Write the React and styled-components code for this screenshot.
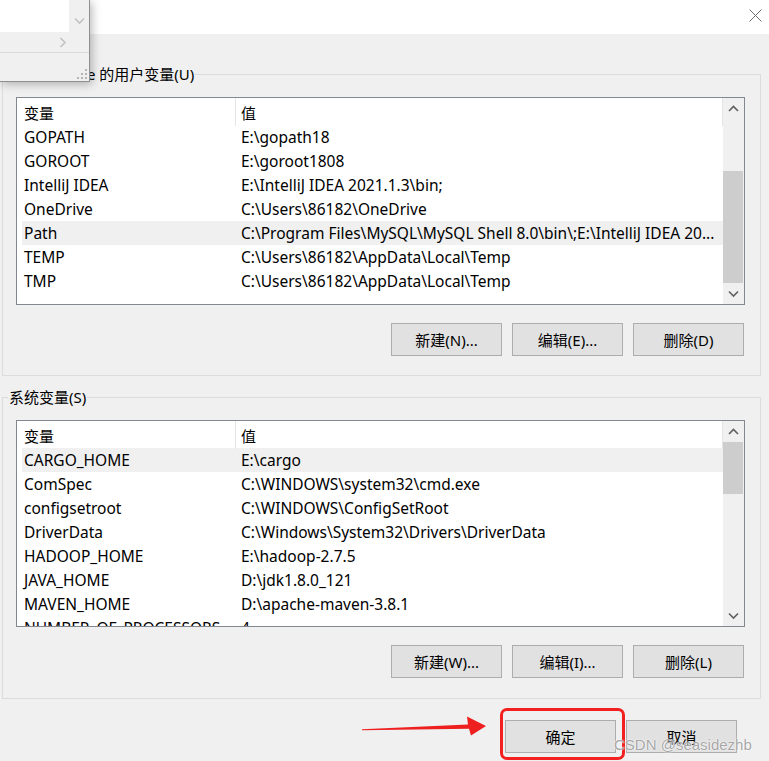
import React from 'react';
import styled, { createGlobalStyle } from 'styled-components';

const GlobalStyle = createGlobalStyle`
  html, body {
    margin: 0;
    padding: 0;
    background: #f0f0f0;
  }

  body {
    font-family: 'Noto Sans', 'Noto Sans CJK SC', sans-serif;
    font-size: 15px;
    color: #000;
  }
`;

const Dialog = styled.div`
  position: relative;
  width: 769px;
  height: 761px;
  overflow: hidden;
  background: #f0f0f0;
`;

const TitleBar = styled.div`
  height: 34px;
  background: #fff;
  display: flex;
  justify-content: flex-end;
`;

const CloseButton = styled.button`
  width: 28px;
  height: 30px;
  padding: 0;
  border: 0;
  background: transparent;
  display: flex;
  align-items: center;
  justify-content: center;
`;

const GroupBox = styled.fieldset`
  margin: ${({ $top }) => $top}px 8px 0 2px;
  padding: 0;
  min-width: 0;
  border: 1px solid #dcdcdc;
`;

const Legend = styled.legend`
  margin-left: 5px;
  padding: 0 1px;
  line-height: 20px;
`;

const GroupBody = styled.div`
  padding: 13px 15px ${({ $bottom }) => $bottom}px 13px;
`;

const ListFrame = styled.div`
  box-sizing: border-box;
  height: ${({ $height }) => $height}px;
  border: 1px solid #828790;
  background: #fff;
  display: flex;
`;

const ListBody = styled.div`
  flex: 1;
  min-width: 0;
  overflow: hidden;
`;

const HeaderRow = styled.div`
  display: grid;
  grid-template-columns: 219px 1fr;
  height: 27px;
`;

const HeaderCell = styled.div`
  box-sizing: border-box;
  padding: 2px 0 0 ${({ $first }) => ($first ? 7 : 5)}px;
  line-height: 26px;
  border-right: 1px solid #e5e5e5;
`;

const Row = styled.div`
  display: grid;
  grid-template-columns: 214px 1fr;
  height: 24px;
  line-height: 24px;
  margin-left: 5px;
  font-size: 15.5px;
  background: ${({ $selected }) => ($selected ? '#f0f0f0' : 'transparent')};
`;

const Cell = styled.div`
  padding: 0 ${({ $first }) => ($first ? '0 0 2px' : '5px 0 5px')};
  white-space: nowrap;
  overflow: hidden;
  text-overflow: ellipsis;
`;

const ScrollBar = styled.div`
  width: 21px;
  background: #f0f0f0;
  display: flex;
  flex-direction: column;
`;

const ScrollArrow = styled.div`
  height: 21px;
  flex-shrink: 0;
  display: flex;
  align-items: center;
  justify-content: center;
`;

const Track = styled.div`
  flex: 1;
  display: flex;
  flex-direction: column;
  justify-content: ${({ $at }) => ($at === 'end' ? 'flex-end' : 'flex-start')};
`;

const Thumb = styled.div`
  height: ${({ $size }) => $size}px;
  margin-right: 1px;
  background: #cdcdcd;
`;

const ButtonRow = styled.div`
  display: flex;
  justify-content: flex-end;
  gap: 10px;
  margin-top: 18px;
  padding-right: 1px;
`;

const PushButton = styled.button`
  width: 111px;
  height: 33px;
  padding: 0;
  border: 1px solid #adadad;
  background: #e1e1e1;
  color: #000;
  font: inherit;
`;

const DialogButtons = styled.div`
  display: flex;
  justify-content: flex-end;
  gap: 10px;
  margin-top: 21px;
  padding-right: 32px;
`;

// the other window peeking in at the top left corner
const MiniWindow = styled.div`
  position: absolute;
  left: 0;
  top: 0;
  width: 89px;
  height: 81px;
  display: flex;
  flex-direction: column;
  background: #f0f0f0;
  border-right: 1px solid #8f8f8f;
  border-bottom: 1px solid #8f8f8f;
  box-shadow: 2px 2px 9px rgba(0, 0, 0, 0.28);
`;

const MiniTop = styled.div`
  height: 32px;
  display: flex;
`;

const MiniPane = styled.div`
  flex: 1;
  background: #fff;
`;

const MiniVScroll = styled.div`
  width: 20px;
  display: flex;
  justify-content: center;
  padding-top: 17px;
  box-sizing: border-box;
`;

const MiniHScroll = styled.div`
  height: 20px;
  display: flex;
  justify-content: flex-end;
  align-items: center;
  padding-right: 22px;
`;

const MiniStatus = styled.div`
  flex: 1;
  border-top: 1px solid #dadada;
  display: flex;
  justify-content: flex-end;
  align-items: flex-end;
  padding: 0 1px 1px 0;
`;

const RedBox = styled.div`
  position: absolute;
  left: 500px;
  top: 708px;
  width: 125px;
  height: 52px;
  box-sizing: border-box;
  border: 3px solid #f2201f;
  border-radius: 7px;
  pointer-events: none;
`;

const RedArrow = styled.svg`
  position: absolute;
  left: 360px;
  top: 712px;
  pointer-events: none;
`;

const Watermark = styled.div`
  position: absolute;
  left: 614px;
  top: 736px;
  font-family: 'Liberation Sans', sans-serif;
  font-size: 15px;
  line-height: 18px;
  color: rgba(150, 150, 150, 0.85);
  text-shadow: 0 0 2px rgba(255, 255, 255, 0.95), 0 0 1px rgba(255, 255, 255, 0.95);
  pointer-events: none;
`;

const Chevron = ({ dir, color = '#606060' }) => {
  const points = {
    up: '1,6 5.5,1.5 10,6',
    down: '1,1.5 5.5,6 10,1.5',
  }[dir];
  return (
    <svg width="11" height="8" viewBox="0 0 11 8">
      <polyline points={points} fill="none" stroke={color} strokeWidth="1.6" />
    </svg>
  );
};

const Grip = () => (
  <svg width="12" height="12" viewBox="0 0 12 12">
    {[[8, 0], [4, 4], [8, 4], [0, 8], [4, 8], [8, 8]].map(([x, y]) => (
      <rect key={`${x}-${y}`} x={x + 1} y={y + 1} width="2" height="2" fill="#b4b4b4" />
    ))}
  </svg>
);

const userVars = [
  { name: 'GOPATH', value: 'E:\\gopath18' },
  { name: 'GOROOT', value: 'E:\\goroot1808' },
  { name: 'IntelliJ IDEA', value: 'E:\\IntelliJ IDEA 2021.1.3\\bin;' },
  { name: 'OneDrive', value: 'C:\\Users\\86182\\OneDrive' },
  { name: 'Path', value: 'C:\\Program Files\\MySQL\\MySQL Shell 8.0\\bin\\;E:\\IntelliJ IDEA 20...', selected: true },
  { name: 'TEMP', value: 'C:\\Users\\86182\\AppData\\Local\\Temp' },
  { name: 'TMP', value: 'C:\\Users\\86182\\AppData\\Local\\Temp' },
];

const systemVars = [
  { name: 'CARGO_HOME', value: 'E:\\cargo', selected: true },
  { name: 'ComSpec', value: 'C:\\WINDOWS\\system32\\cmd.exe' },
  { name: 'configsetroot', value: 'C:\\WINDOWS\\ConfigSetRoot' },
  { name: 'DriverData', value: 'C:\\Windows\\System32\\Drivers\\DriverData' },
  { name: 'HADOOP_HOME', value: 'E:\\hadoop-2.7.5' },
  { name: 'JAVA_HOME', value: 'D:\\jdk1.8.0_121' },
  { name: 'MAVEN_HOME', value: 'D:\\apache-maven-3.8.1' },
  { name: 'NUMBER_OF_PROCESSORS', value: '4' },
];

const VarList = ({ rows, height, thumbSize, thumbAt }) => (
  <ListFrame $height={height}>
    <ListBody>
      <HeaderRow>
        <HeaderCell $first>变量</HeaderCell>
        <HeaderCell>值</HeaderCell>
      </HeaderRow>
      {rows.map((row) => (
        <Row key={row.name} $selected={row.selected}>
          <Cell $first>{row.name}</Cell>
          <Cell>{row.value}</Cell>
        </Row>
      ))}
    </ListBody>
    <ScrollBar>
      <ScrollArrow><Chevron dir="up" /></ScrollArrow>
      <Track $at={thumbAt}>
        <Thumb $size={thumbSize} />
      </Track>
      <ScrollArrow><Chevron dir="down" /></ScrollArrow>
    </ScrollBar>
  </ListFrame>
);

const VarGroup = ({ title, top, bottom, buttons, ...list }) => (
  <GroupBox $top={top}>
    <Legend>{title}</Legend>
    <GroupBody $bottom={bottom}>
      <VarList {...list} />
      <ButtonRow>
        {buttons.map((label) => <PushButton key={label}>{label}</PushButton>)}
      </ButtonRow>
    </GroupBody>
  </GroupBox>
);

export default function App() {
  return (
    <Dialog>
      <GlobalStyle />
      <TitleBar>
        <CloseButton aria-label="关闭">
          <svg width="13" height="13" viewBox="0 0 13 13">
            <path d="M0.5 0.5 L12.5 12.5 M12.5 0.5 L0.5 12.5" stroke="#6e6e6e" strokeWidth="1" />
          </svg>
        </CloseButton>
      </TitleBar>

      <VarGroup
        title="ASUS_Home 的用户变量(U)"
        top={30}
        bottom={19}
        rows={userVars}
        height={208}
        thumbSize={112}
        thumbAt="end"
        buttons={['新建(N)...', '编辑(E)...', '删除(D)']}
      />

      <VarGroup
        title="系统变量(S)"
        top={11}
        bottom={20}
        rows={systemVars}
        height={207}
        thumbSize={52}
        thumbAt="start"
        buttons={['新建(W)...', '编辑(I)...', '删除(L)']}
      />

      <DialogButtons>
        <PushButton>确定</PushButton>
        <PushButton>取消</PushButton>
      </DialogButtons>

      <MiniWindow>
        <MiniTop>
          <MiniPane />
          <MiniVScroll><Chevron dir="down" color="#c2c2c2" /></MiniVScroll>
        </MiniTop>
        <MiniHScroll>
          <svg width="8" height="11" viewBox="0 0 8 11">
            <polyline points="1.5,1 6,5.5 1.5,10" fill="none" stroke="#c2c2c2" strokeWidth="1.6" />
          </svg>
        </MiniHScroll>
        <MiniStatus><Grip /></MiniStatus>
      </MiniWindow>

      <RedBox />
      <RedArrow width="130" height="28" viewBox="0 0 130 28">
        <polygon
          points="2,17.2 108,12.4 107,4.5 126,14 111,23.5 109,16.8 2,18.2"
          fill="#ee1f1f"
        />
      </RedArrow>
      <Watermark>CSDN @seasidezhb</Watermark>
    </Dialog>
  );
}
